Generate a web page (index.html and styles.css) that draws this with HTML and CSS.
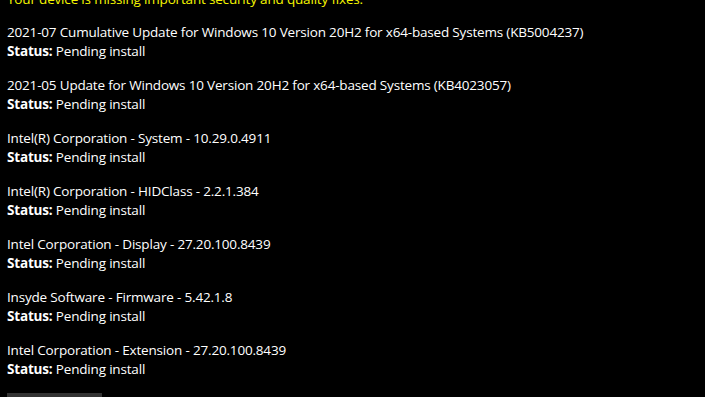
FILE: index.html
```html
<!DOCTYPE html>
<html lang="en">

<head>
	<meta charset="UTF-8">
	<meta name="viewport" content="width=device-width, initial-scale=1.0">
	<title>Windows Update</title>

	<link rel="stylesheet" href="styles.css">
</head>

<body>
	<div class="page">
		<p class="warning">Your device is missing important security and quality fixes.</p>

		<ul class="updates">
			<li class="update">
				<span class="update__name">2021-07 Cumulative Update for Windows 10 Version 20H2 for x64-based Systems (KB5004237)</span>
				<span class="update__status"><b>Status:</b> Pending install</span>
			</li>
			<li class="update">
				<span class="update__name">2021-05 Update for Windows 10 Version 20H2 for x64-based Systems (KB4023057)</span>
				<span class="update__status"><b>Status:</b> Pending install</span>
			</li>
			<li class="update">
				<span class="update__name">Intel(R) Corporation - System - 10.29.0.4911</span>
				<span class="update__status"><b>Status:</b> Pending install</span>
			</li>
			<li class="update">
				<span class="update__name">Intel(R) Corporation - HIDClass - 2.2.1.384</span>
				<span class="update__status"><b>Status:</b> Pending install</span>
			</li>
			<li class="update">
				<span class="update__name">Intel Corporation - Display - 27.20.100.8439</span>
				<span class="update__status"><b>Status:</b> Pending install</span>
			</li>
			<li class="update">
				<span class="update__name">Insyde Software - Firmware - 5.42.1.8</span>
				<span class="update__status"><b>Status:</b> Pending install</span>
			</li>
			<li class="update">
				<span class="update__name">Intel Corporation - Extension - 27.20.100.8439</span>
				<span class="update__status"><b>Status:</b> Pending install</span>
			</li>
		</ul>

		<button class="install-button" type="button">Install now</button>
	</div>
</body>

</html>
```

FILE: styles.css
```css
body {
	font-family: "Open Sans", "Noto Sans", sans-serif;
	font-size: 13.5px;
	letter-spacing: -0.18px;
	margin: 0;
	padding: 0;
	background-color: #000;
	color: #fff;
	overflow: hidden;
}

.page {
	padding: 0 7px;
	margin-top: -10px;
}

.warning {
	color: #f5f500;
	margin: 0 0 14px;
	line-height: 19px;
}

.updates {
	list-style: none;
	margin: 0;
	padding: 0;
	display: flex;
	flex-direction: column;
	gap: 15px;
}

.update {
	display: flex;
	flex-direction: column;
}

.update__name,
.update__status {
	line-height: 19px;
	white-space: nowrap;
}

.update__status b {
	font-weight: 700;
}

.install-button {
	margin-top: 14px;
	width: 95px;
	height: 32px;
	border: none;
	background-color: #333;
	color: #fff;
	font: inherit;
}
```
